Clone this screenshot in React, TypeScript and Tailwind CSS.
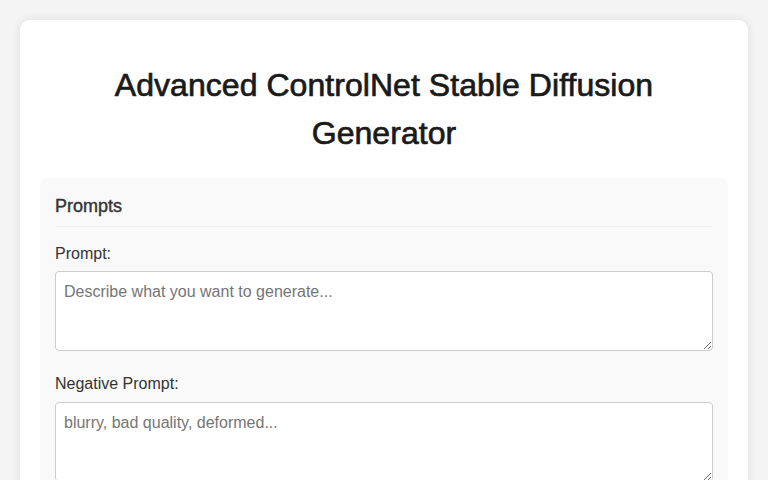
export default function App() {
  return (
    <div className="min-h-screen bg-[#f4f4f4] p-5 font-['Liberation_Sans',Arial,sans-serif] text-[#333]">
      <div className="rounded-[10px] bg-white p-5 shadow-[0_0_10px_rgba(0,0,0,0.1)]">
        <h1 className="my-[21px] text-center text-[32px] font-normal leading-[48px] tracking-[0.05px] text-[#1a1a1a] [-webkit-text-stroke:0.7px_#1a1a1a]">
          Advanced ControlNet Stable Diffusion Generator
        </h1>
        <div className="rounded-lg bg-[#f9f9f9] p-[15px]">
          <h3 className="mb-[15px] border-b border-[#eee] pb-[6px] text-[18px] font-normal leading-[27px] text-[#333] [-webkit-text-stroke:0.4px_#333]">
            Prompts
          </h3>
          <div className="mb-[21px]">
            <label className="mb-[5px] block text-[16px] leading-[24px] text-[#333]">Prompt:</label>
            <textarea
              className="block h-20 w-full rounded border border-[#ccc] bg-white px-2 py-2 text-[16px] leading-[24px] text-[#333] placeholder:text-[#757575]"
              placeholder="Describe what you want to generate..."
            />
          </div>
          <div className="mb-[21px]">
            <label className="mb-[6px] block text-[16px] leading-[24px] text-[#333]">Negative Prompt:</label>
            <textarea
              className="block h-20 w-full rounded border border-[#ccc] bg-white px-2 py-2 text-[16px] leading-[24px] text-[#333] placeholder:text-[#757575]"
              placeholder="blurry, bad quality, deformed..."
            />
          </div>
        </div>
      </div>
    </div>
  );
}
